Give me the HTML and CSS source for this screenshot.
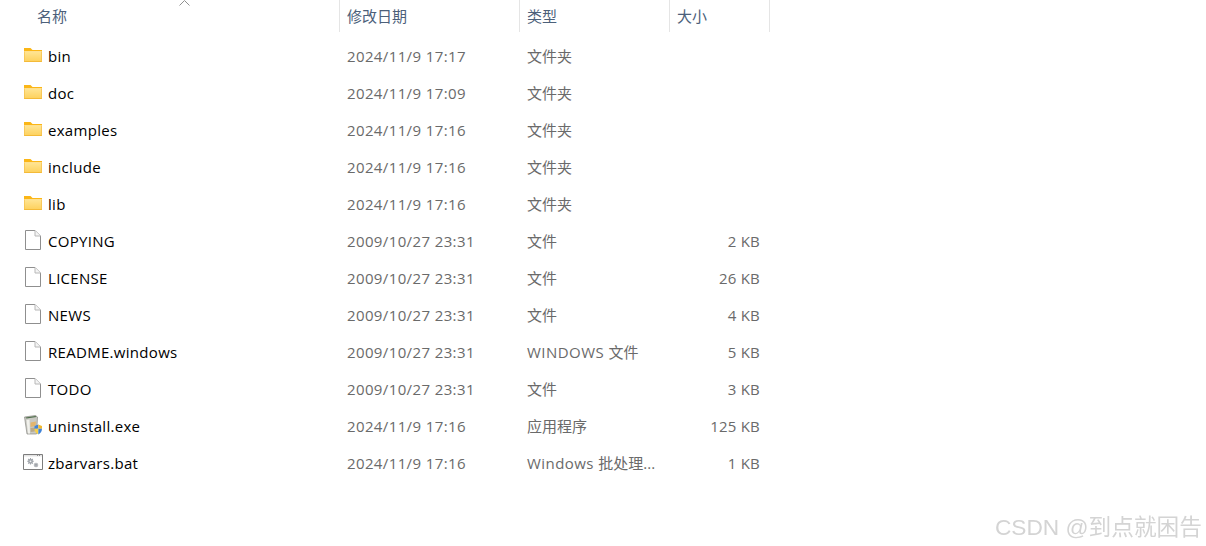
FILE: index.html
```html
<!DOCTYPE html>
<html lang="zh">
<head>
<meta charset="utf-8">
<title>zbar</title>
<link rel="stylesheet" href="styles.css">
</head>
<body>
<svg class="defs" width="0" height="0" aria-hidden="true">
  <defs>
    <linearGradient id="fg" x1="0" y1="0" x2="0" y2="1">
      <stop offset="0" stop-color="#ffe594"/>
      <stop offset="1" stop-color="#fdd05a"/>
    </linearGradient>
    <symbol id="folder" viewBox="0 0 20 20">
      <path d="M1 3h6.500l2 2H19v1.500H1z" fill="#fbb616"/>
      <path d="M1 6.500h18v10.500H1z" fill="url(#fg)"/>
      <path d="M1 16.200h18v.8H1z" fill="#f2b430"/>
      <path d="M1 6.500h.7v10H1zM18.300 6.500h.7v10h-.7z" fill="#f5c04c"/>
    </symbol>
    <symbol id="file" viewBox="0 0 20 20">
      <path d="M2.500 .5h9.500l5.500 5.500v13.500H2.500z" fill="#fff" stroke="#8f8f8f"/>
      <path d="M12 .5v5.500h5.500" fill="#f4f4f4" stroke="#b8b8b8"/>
    </symbol>
    <symbol id="exe" viewBox="0 0 20 20">
      <path d="M1.500 2l11-1.500 2 1.500-1 17H4z" fill="#c9c9c3" stroke="#8a8a84" stroke-width=".7"/>
      <path d="M2.500 2.500 12.500 1l1 1-10 1.500z" fill="#4f6e4b"/>
      <path d="M3.500 5l3-.5.500 14H5z" fill="#f1f1ec"/>
      <path d="M7.500 7.500l5.500-1-.5 4.500-5 1z" fill="#e2b56e"/>
      <path d="M7.500 13l4.500-.5-.3 4-4 .5z" fill="#b9a98a"/>
      <path d="M11.500 11l3.800-1.500v4.300h-3.800z" fill="#3f83d8"/>
      <path d="M15.300 9.500l3.700 1.500v2.800h-3.700z" fill="#f2b92c"/>
      <path d="M11.500 13.800h3.800v5.700c-2.200-1-3.800-2.700-3.800-5.700z" fill="#f6cf4a"/>
      <path d="M15.300 13.800H19c0 3-1.600 4.700-3.700 5.700z" fill="#3f83d8"/>
    </symbol>
    <symbol id="bat" viewBox="0 0 20 20">
      <path d="M.5 2.500h19v15H.5z" fill="#fff" stroke="#7d7d7d"/>
      <path d="M1 3h18v1.500H1z" fill="#e4e4e4"/>
      <path d="M14 3.500h1M16 3.500h1" stroke="#8c8c8c"/>
      <path d="M7.500 6v6.600M4.200 9.300h6.600M5.200 7l4.600 4.600M9.800 7l-4.600 4.600" stroke="#a0a5ab" stroke-width="1.100"/>
      <circle cx="7.500" cy="9.300" r="2.400" fill="#a0a5ab"/>
      <circle cx="7.500" cy="9.300" r=".9" fill="#eef0f2"/>
      <path d="M13 10.800v4.400M10.800 13h4.400M11.500 11.500l3 3M14.500 11.500l-3 3" stroke="#8e9399" stroke-width=".9"/>
      <circle cx="13" cy="13" r="1.500" fill="#8e9399"/>
      <circle cx="13" cy="13" r=".6" fill="#eef0f2"/>
    </symbol>
  </defs>
</svg>

<main class="list">
  <header class="head">
    <div class="hcell hname">名称
      <svg class="sort" width="11" height="6" viewBox="0 0 11 6"><path d="M.5 5.500 5.500 .5l5 5" fill="none" stroke="#8f8f8f"/></svg>
    </div>
    <div class="hcell">修改日期</div>
    <div class="hcell">类型</div>
    <div class="hcell">大小</div>
  </header>

  <div class="rows">
    <div class="row"><div class="name"><svg class="ico"><use href="#folder"/></svg>bin</div><div class="cell date">2024/11/9 17:17</div><div class="cell">文件夹</div><div class="cell size"></div></div>
    <div class="row"><div class="name"><svg class="ico"><use href="#folder"/></svg>doc</div><div class="cell date">2024/11/9 17:09</div><div class="cell">文件夹</div><div class="cell size"></div></div>
    <div class="row"><div class="name"><svg class="ico"><use href="#folder"/></svg>examples</div><div class="cell date">2024/11/9 17:16</div><div class="cell">文件夹</div><div class="cell size"></div></div>
    <div class="row"><div class="name"><svg class="ico"><use href="#folder"/></svg>include</div><div class="cell date">2024/11/9 17:16</div><div class="cell">文件夹</div><div class="cell size"></div></div>
    <div class="row"><div class="name"><svg class="ico"><use href="#folder"/></svg>lib</div><div class="cell date">2024/11/9 17:16</div><div class="cell">文件夹</div><div class="cell size"></div></div>
    <div class="row"><div class="name"><svg class="ico"><use href="#file"/></svg>COPYING</div><div class="cell date">2009/10/27 23:31</div><div class="cell">文件</div><div class="cell size">2 KB</div></div>
    <div class="row"><div class="name"><svg class="ico"><use href="#file"/></svg>LICENSE</div><div class="cell date">2009/10/27 23:31</div><div class="cell">文件</div><div class="cell size">26 KB</div></div>
    <div class="row"><div class="name"><svg class="ico"><use href="#file"/></svg>NEWS</div><div class="cell date">2009/10/27 23:31</div><div class="cell">文件</div><div class="cell size">4 KB</div></div>
    <div class="row"><div class="name"><svg class="ico"><use href="#file"/></svg>README.windows</div><div class="cell date">2009/10/27 23:31</div><div class="cell"><span class="lat">WINDOWS </span>文件</div><div class="cell size">5 KB</div></div>
    <div class="row"><div class="name"><svg class="ico"><use href="#file"/></svg>TODO</div><div class="cell date">2009/10/27 23:31</div><div class="cell">文件</div><div class="cell size">3 KB</div></div>
    <div class="row"><div class="name"><svg class="ico"><use href="#exe"/></svg>uninstall.exe</div><div class="cell date">2024/11/9 17:16</div><div class="cell">应用程序</div><div class="cell size">125 KB</div></div>
    <div class="row"><div class="name"><svg class="ico"><use href="#bat"/></svg>zbarvars.bat</div><div class="cell date">2024/11/9 17:16</div><div class="cell"><span class="lat">Windows </span>批处理...</div><div class="cell size">1 KB</div></div>
  </div>
</main>

<div class="mark">CSDN @到点就困告</div>
</body>
</html>
```
FILE: styles.css
```css
* { box-sizing: border-box; }
html, body { margin: 0; padding: 0; height: 100%; background: #fff; overflow: hidden; }
body { font-family: "Open Sans", "Noto Sans CJK SC", sans-serif; font-size: 15px; color: #000; position: relative; }
.defs { position: absolute; }
.list { width: 770px; }
.head, .row { display: grid; grid-template-columns: 340px 180px 150px 100px; }
.head { height: 32px; }
.hcell { border-right: 1px solid #e5e5e5; padding: 0 7px; line-height: 32px; color: #4c607a; }
.hname { padding-left: 37px; position: relative; }
.sort { position: absolute; left: 179px; top: 0; }
.rows { padding-top: 6px; }
.row { height: 37px; align-items: center; }
.name { display: flex; align-items: center; padding-left: 23px; gap: 5px; padding-bottom: 1px; letter-spacing: .3px; }
.ico { width: 20px; height: 20px; flex: none; margin-top: -2px; }
.cell { padding-left: 7px; color: #6a6a6a; white-space: nowrap; line-height: 20px; padding-bottom: 2px; }
.date { letter-spacing: .38px; padding-bottom: 1px; }
.lat { letter-spacing: .45px; }
.size { text-align: right; padding-right: 10px; letter-spacing: .2px; padding-bottom: 1px; }
.mark { position: absolute; right: 4px; bottom: 5px; font-family: "Liberation Sans", "Noto Sans CJK SC", sans-serif; font-size: 22.7px; line-height: 28px; color: #d4d4d4; filter: blur(.4px); }
```
